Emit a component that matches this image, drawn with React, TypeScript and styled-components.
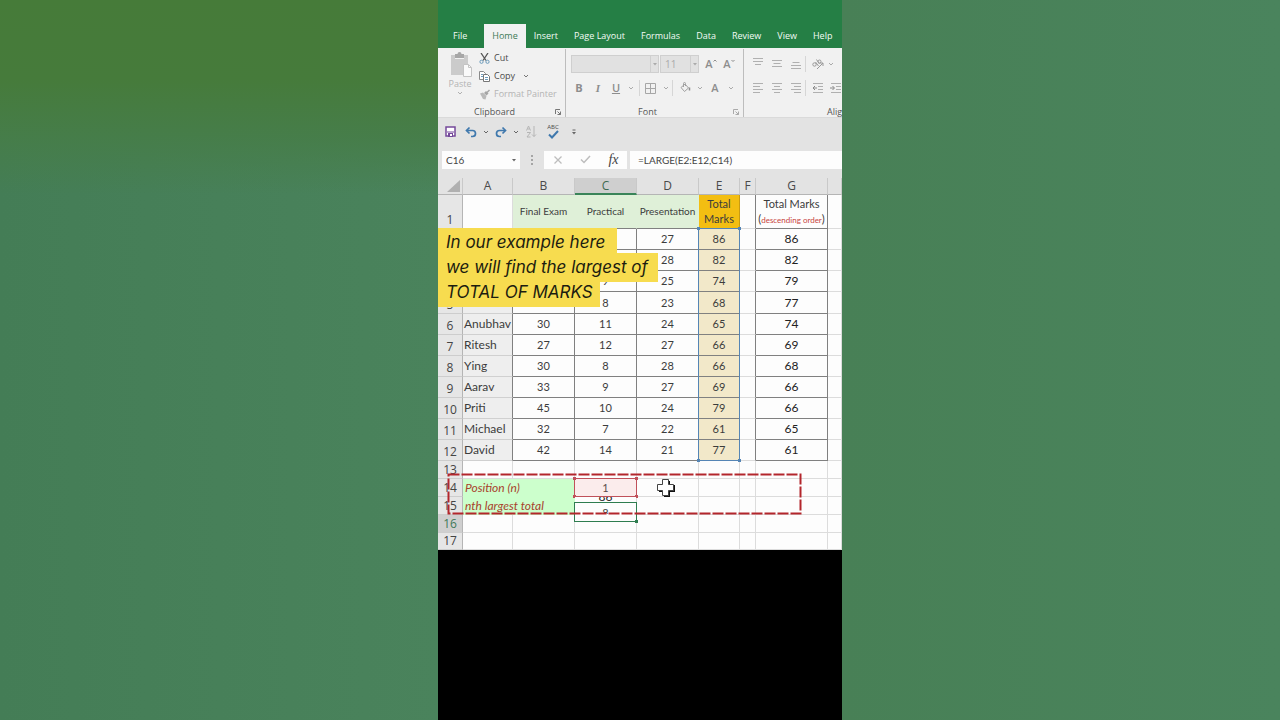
import React from "react";
import styled, { createGlobalStyle, css } from "styled-components";

const GlobalStyle = createGlobalStyle`
  *, *::before, *::after { box-sizing: border-box; }
  body { margin: 0; background: #49825b; }
  button, input, select { font: inherit; color: inherit; margin: 0; border-radius: 0; }
  svg { flex: none; }
`;

const uiFont = `"Open Sans", "Noto Sans", sans-serif`;
const cellFont = `Lato, "Open Sans", sans-serif`;

const Page = styled.div`
  display: flex;
  min-height: 100vh;
  overflow: hidden;
  font-family: ${uiFont};
  font-size: 9px;
  line-height: 12px;
  color: #444;
`;

const Backdrop = styled.div<{ $side: "left" | "right" }>`
  flex: 438 1 0;
  background: ${(p) =>
    p.$side === "left"
      ? "linear-gradient(180deg, #467b39 0, #467b3b 11%, rgba(70, 125, 72, 0.9) 19%, rgba(70, 127, 86, 0) 27%), linear-gradient(90deg, #447d56, #4a835c)"
      : "linear-gradient(90deg, #488056, #4a845d)"};
`;

const Video = styled.main`
  flex: 404 1 0;
  min-width: 404px;
  overflow: hidden;
  background: #000;
`;

const Workbook = styled.div`
  background: #e3e3e3;
`;

/* ---------- Ribbon ---------- */

const TitleBar = styled.header`
  padding-top: 24px;
  background: #257f45;
`;

const TabList = styled.nav`
  display: flex;
  height: 24px;
  padding-left: 7px;
`;

const Tab = styled.button<{ $active?: boolean; $first?: boolean }>`
  flex: none;
  padding: 0 8px;
  margin-right: ${(p) => (p.$first ? "9px" : "0")};
  border: 0;
  background: ${(p) => (p.$active ? "#f1f1f1" : "transparent")};
  color: ${(p) => (p.$active ? "#3d7a55" : "#f3fbf5")};
  white-space: nowrap;
`;

const Ribbon = styled.div`
  display: flex;
  height: 70px;
  padding-top: 1px;
  background: #f1f1f1;
  border-bottom: 1px solid #dadada;
`;

const Group = styled.section<{ $width: number }>`
  display: flex;
  flex-direction: column;
  justify-content: space-between;
  flex: 0 0 ${(p) => p.$width}px;
  border-right: 1px solid #bdbdbd;
`;

const GroupFooter = styled.footer`
  display: grid;
  grid-template-columns: 1fr 14px;
  align-items: center;
  justify-items: center;
  height: 11px;
  color: #555;
`;

const ToolButton = styled.button<{ $dim?: boolean; $w?: number }>`
  display: flex;
  flex: none;
  align-items: center;
  justify-content: ${(p) => (p.$w ? "center" : "flex-start")};
  gap: 4px;
  width: ${(p) => (p.$w ? `${p.$w}px` : "auto")};
  height: 18px;
  padding: 0;
  border: 0;
  background: none;
  color: ${(p) => (p.$dim ? "#b4b4b4" : "#4a4a4a")};
  white-space: nowrap;
`;

const ClipboardBody = styled.div`
  display: flex;
  gap: 7px;
  padding-left: 10px;
`;

const PasteButton = styled.button`
  display: flex;
  flex-direction: column;
  align-items: center;
  width: 24px;
  padding: 3px 0 0;
  border: 0;
  background: none;
  color: #b4b4b4;
`;

const ClipActions = styled.div`
  display: flex;
  flex-direction: column;
`;

const CopyLabel = styled.span`
  margin-right: 4px;
`;

const GroupRows = styled.div`
  display: flex;
  flex-direction: column;
  gap: 6px;
  padding: 6px 0 0 5px;
`;

const Row = styled.div`
  display: flex;
  align-items: center;
  height: 18px;
`;

const Picker = styled.div<{ $w: number }>`
  position: relative;
  flex: none;
  width: ${(p) => p.$w}px;
  height: 18px;
  margin-right: 1px;

  select {
    appearance: none;
    display: block;
    width: 100%;
    height: 18px;
    padding: 0 0 0 4px;
    border: 1px solid #cfcfcf;
    background: #e1e1e1;
    color: #aaa;
    font-size: 10px;
  }
  svg {
    position: absolute;
    top: 6px;
    right: 1px;
    pointer-events: none;
  }
  &::after {
    content: "";
    position: absolute;
    top: 0;
    right: 8px;
    height: 18px;
    border-left: 1px solid #cfcfcf;
  }
`;

const Glyph = styled.span<{ $kind?: "bold" | "italic" | "under" }>`
  font-size: 11px;
  color: #8d8d8d;
  font-weight: ${(p) => (p.$kind === "bold" ? 700 : 600)};
  font-style: ${(p) => (p.$kind === "italic" ? "italic" : "normal")};
  font-family: ${(p) => (p.$kind === "italic" ? `"Liberation Serif", serif` : "inherit")};
  text-decoration: ${(p) => (p.$kind === "under" ? "underline" : "none")};
`;

const Divider = styled.span`
  flex: none;
  width: 1px;
  height: 16px;
  background: #d6d6d6;
`;

/* ---------- Quick access and formula bar ---------- */

const QuickAccess = styled.div`
  display: flex;
  align-items: center;
  height: 27px;
  padding-left: 4px;
`;

const FormulaBar = styled.div`
  display: flex;
  align-items: center;
  height: 33px;
  padding: 0 0 4px 4px;
  font-family: ${cellFont};
  font-size: 10px;
`;

const NameBox = styled.div`
  position: relative;
  flex: none;
  width: 78px;

  svg {
    position: absolute;
    top: 6px;
    right: 3px;
  }
`;

const BarInput = styled.input<{ $pad: number }>`
  display: block;
  width: 100%;
  min-width: 0;
  height: 18px;
  padding: 0 0 0 ${(p) => p.$pad}px;
  border: 0;
  background: #fdfdfd;
  color: #444;
`;

const FormulaActions = styled.div`
  display: flex;
  flex: none;
  width: 83px;
  margin-right: 3px;
  background: #fdfdfd;
`;

/* ---------- Sheet ---------- */

const Sheet = styled.div`
  position: relative;
`;

const Grid = styled.table`
  width: 100%;
  table-layout: fixed;
  border-collapse: separate;
  border-spacing: 0;
  background: #fdfdfd;
  font-family: ${cellFont};
  font-size: 11px;
  color: #3c3c3c;
`;

const SheetRow = styled.tr<{ $h: number }>`
  height: ${(p) => p.$h}px;
`;

const ColHead = styled.th<{ $selected?: boolean }>`
  padding: 0;
  border-right: 1px solid #c9c9c9;
  border-bottom: ${(p) => (p.$selected ? "2px solid #3a8459" : "1px solid #b5b5b5")};
  background: ${(p) => (p.$selected ? "#cfcfcf" : "#e3e3e3")};
  color: ${(p) => (p.$selected ? "#3f6b52" : "#4a4a4a")};
  font: 400 12px/14px ${uiFont};
`;

const RowHead = styled.th<{ $selected?: boolean }>`
  padding: 0;
  border-right: 1px solid #b5b5b5;
  border-bottom: 1px solid #cdcdcd;
  background: ${(p) => (p.$selected ? "#cfcfcf" : "#e6e6e6")};
  color: ${(p) => (p.$selected ? "#3f7a59" : "#444")};
  font: 400 12px/16px ${uiFont};
  vertical-align: bottom;
`;

type Look = "plain" | "name" | "boxed" | "ranked" | "green" | "gold" | "total" | "spacer" | "heading" | "label";

const looks = {
  plain: css`
    border-color: #dcdcdc;
  `,
  name: css`
    background: #eeeeee;
    border-color: #d0d0d0 #808080 #d0d0d0 #d0d0d0;
    font-size: 12px;
    text-align: left;
    padding-left: 1px;
  `,
  boxed: css`
    border-color: #808080;
  `,
  ranked: css`
    border-color: #808080;
    font-size: 12px;
    color: #222;
  `,
  green: css`
    background: #dff0d8;
    border-color: #dff0d8;
    border-bottom-color: #808080;
    font-size: 10px;
    padding-bottom: 2px;
  `,
  gold: css`
    background: #f3be12;
    border-color: #c99b12;
    line-height: 15px;
    padding-bottom: 2px;
  `,
  total: css`
    background: #f2e8c9;
    border-color: #808080;
  `,
  spacer: css`
    border-color: #dcdcdc #808080 #dcdcdc #dcdcdc;
  `,
  heading: css`
    border-color: #808080;
    line-height: 15px;
  `,
  label: css`
    background: #ccffcc;
    border-color: #ccffcc;
    color: #a8432c;
    font-size: 12px;
    font-style: italic;
    text-align: left;
    padding-left: 2px;
  `,
};

const Cell = styled.td<{ $look: Look }>`
  padding: 0;
  border: 0 solid;
  border-width: 0 1px 1px 0;
  line-height: 14px;
  text-align: center;
  white-space: nowrap;
  ${(p) => looks[p.$look]}
`;

const OrderNote = styled.small`
  font-size: 8px;
  color: #c8453f;
`;

/* Marks drawn above the cells they annotate. */
const Overlay = styled.div<{ $x: number; $y: number }>`
  position: absolute;
  left: ${(p) => p.$x}px;
  top: ${(p) => p.$y}px;
  pointer-events: none;
`;

const RangeOutline = styled(Overlay)<{ $color: string; $w: number; $h: number; $fill?: string }>`
  display: flex;
  align-items: flex-start;
  justify-content: center;
  width: ${(p) => p.$w}px;
  height: ${(p) => p.$h}px;
  border: 1px solid ${(p) => p.$color};
  background: ${(p) => p.$fill ?? "transparent"};
  font: 11px/17px ${cellFont};
`;

const Handle = styled.i<{ $color: string; $at: string }>`
  position: absolute;
  ${(p) => (p.$at[0] === "t" ? "top: -2px;" : "bottom: -2px;")}
  ${(p) => (p.$at[1] === "l" ? "left: -2px;" : "right: -2px;")}
  width: 3px;
  height: 3px;
  background: ${(p) => p.$color};
`;

const RollingValue = styled(Overlay)`
  display: flex;
  align-items: flex-end;
  justify-content: center;
  width: 61px;
  height: 6px;
  overflow: hidden;
  background: #fdfdfd;
  font: 12px/12px ${cellFont};
  color: #222;
`;

const RollingTop = styled.span`
  height: 11px;
  overflow: hidden;
  line-height: 20px;
`;

const Caption = styled(Overlay)`
  display: flex;
  flex-direction: column;
  align-items: flex-start;
  font: italic 17px/20px Inter, sans-serif;
  color: #1c1c10;
`;

const CaptionLine = styled.span<{ $pad: string }>`
  padding: ${(p) => p.$pad};
  background: #f7dc4f;
  white-space: nowrap;
`;

/* ---------- Icons ---------- */

const Svg = ({ w, h = w, children }: { w: number; h?: number; children: React.ReactNode }) => (
  <svg width={w} height={h} viewBox={`0 0 ${w} ${h}`} fill="none" aria-hidden="true">
    {children}
  </svg>
);

const Chevron = ({ color = "#777" }: { color?: string }) => (
  <Svg w={6}>
    <path d="M1 2l2 2 2-2" stroke={color} />
  </Svg>
);

const Caret = ({ color = "#666" }: { color?: string }) => (
  <Svg w={6}>
    <path d="M1 2h4L3 4.5z" fill={color} />
  </Svg>
);

const OverflowIcon = () => (
  <Svg w={6}>
    <path d="M1.500 1h3" stroke="#666" />
    <path d="M1 3h4L3 5.5z" fill="#666" />
  </Svg>
);

const PasteIcon = () => (
  <Svg w={24} h={26}>
    <path d="M3 3h17v9h-4v11H3z" fill="#cbcbcb" />
    <path d="M7 2h2.5a2 2 0 0 1 4 0H16v4H7z" fill="#a7a7a7" />
    <path d="M7 6.5h9" stroke="#f1f1f1" />
    <path d="M15.5 12.5h5l3 3v9h-8z" fill="#fafafa" stroke="#c4c4c4" />
    <path d="M20.5 12.5v3h3" stroke="#c4c4c4" />
  </Svg>
);

const CutIcon = () => (
  <Svg w={11}>
    <path d="M2 0l5 7.5M9 0L4 7.5" stroke="#555" strokeWidth="1.3" />
    <circle cx="2.5" cy="8.8" r="1.6" stroke="#6e9cbc" />
    <circle cx="8.5" cy="8.8" r="1.6" stroke="#6e9cbc" />
  </Svg>
);

const CopyIcon = () => (
  <Svg w={11}>
    <path d="M.5.5h4l2 2v6h-6z" fill="#fff" stroke="#8a8a8a" />
    <path d="M4.500 3.500h4l2 2v5h-6z" fill="#fff" stroke="#777" />
    <path d="M2 3.500h2M2 5.500h2M6 6.500h3M6 8.500h3" stroke="#6e9cbc" />
  </Svg>
);

const BrushIcon = () => (
  <Svg w={11}>
    <path d="M1 4.500l3-1 3.500 3.500-1 3.500L4 10z" fill="#b9b9b9" />
    <path d="M5 4l2-2 2.500 2.500-2 2z" fill="#a5a5a5" />
    <path d="M8 3.500L10.500 1" stroke="#a5a5a5" strokeWidth="1.5" />
  </Svg>
);

const Launcher = ({ color = "#777" }: { color?: string }) => (
  <Svg w={8}>
    <path d="M1.500 6V1.500H6M3.500 3.500L6.500 6.500M6.500 3.500v3h-3" stroke={color} />
  </Svg>
);

const BordersIcon = () => (
  <Svg w={11}>
    <path d="M.5.5h10v10H.5zM5.500.5v10M.5 5.500h10" stroke="#a6a6a6" />
  </Svg>
);

const FillIcon = () => (
  <Svg w={12}>
    <path d="M2 5.500l4-3.500 3.500 4L5.500 9.500z" stroke="#a0a0a0" />
    <path d="M4.500 5V1.500a1 1 0 0 1 2 0V4" stroke="#a0a0a0" />
    <path d="M10.500 5.500v3" stroke="#8e8e8e" strokeWidth="1.500" />
  </Svg>
);

const GrowMark = ({ up }: { up?: boolean }) => (
  <Svg w={4} h={10}>
    <path d={up ? "M.5 2.500L2 1l1.500 1.500" : "M.5 1L2 2.500 3.500 1"} stroke="#8d8d8d" />
  </Svg>
);

const LinesIcon = ({ rows, shift = 0, top = 0 }: { rows: number[]; shift?: number; top?: number }) => (
  <Svg w={12}>
    {rows.map((len, i) => (
      <path
        key={i}
        d={`M${shift === 0 ? 1 : shift === 1 ? 6 - len / 2 : 11 - len} ${top + i * 3 + 0.5}h${len}`}
        stroke="#b0b0b0"
      />
    ))}
  </Svg>
);

const OrientationIcon = () => (
  <Svg w={12}>
    <path d="M5 11l6-6M11 8V5H8" stroke="#999" />
    <circle cx="2.500" cy="6.500" r="1.700" stroke="#999" />
    <path d="M3.500 4l3 4M4.500 1.500l3 4.500" stroke="#999" />
    <circle cx="7.500" cy="3.500" r="1.500" stroke="#999" />
  </Svg>
);

const IndentIcon = ({ out }: { out?: boolean }) => (
  <Svg w={12}>
    <path d="M1 1.500h10M6 4.500h5M6 7.500h5M1 10.500h10" stroke="#b0b0b0" />
    <path d={out ? "M5 6H1M3 4L1 6l2 2" : "M0 6h4M2.500 4l2 2-2 2"} stroke="#888" />
  </Svg>
);

const SaveIcon = () => (
  <Svg w={11}>
    <path d="M1 1h9v9H1z" fill="#fff" stroke="#75499b" strokeWidth="1.500" />
    <path d="M2 6h7" stroke="#75499b" />
    <path d="M3 7h5v4H3z" fill="#75499b" />
    <path d="M5 8h2v2H5z" fill="#fff" />
  </Svg>
);

const UndoIcon = ({ flip }: { flip?: boolean }) => (
  <Svg w={12}>
    <g transform={flip ? "matrix(-1 0 0 1 12 0)" : undefined}>
      <path d="M2 4.500h5.500a3 3 0 0 1 0 6H6" stroke="#3f78ad" strokeWidth="1.700" />
      <path d="M4.500 1.500l-3 3 3 3" stroke="#3f78ad" strokeWidth="1.700" />
    </g>
  </Svg>
);

const SortIcon = () => (
  <Svg w={11} h={13}>
    <path d="M.5 5.500L2.500 1l2 4.500M1.500 4h2M1 7.500h3.500L1 12h3.500" stroke="#b5b5b5" />
    <path d="M8 1v10.500M6 9.500l2 2 2-2" stroke="#b5b5b5" />
  </Svg>
);

const SpellButton = styled(ToolButton)`
  flex-direction: column;
  gap: 0;
  font-size: 6px;
  line-height: 6px;
`;

const CheckIcon = ({ color = "#3f78ad", width = 2 }: { color?: string; width?: number }) => (
  <Svg w={11} h={9}>
    <path d="M1 4.500L4 7.500 10 1" stroke={color} strokeWidth={width} />
  </Svg>
);

const CrossIcon = () => (
  <Svg w={10}>
    <path d="M1.500 1.500l7 7M8.500 1.500l-7 7" stroke="#bdbdbd" strokeWidth="1.300" />
  </Svg>
);

const Fx = styled.span`
  font: italic 14px/16px "Liberation Serif", serif;
  color: #444;
`;

const DotsIcon = () => (
  <Svg w={24} h={12}>
    <path d="M12 1v10" stroke="#a5a5a5" strokeWidth="2" strokeDasharray="2 2" />
  </Svg>
);

const SelectAll = styled.svg`
  display: block;
`;

const SelectAllIcon = () => (
  <SelectAll width="24" height="16" viewBox="0 0 24 16" aria-hidden="true">
    <path d="M22 2v12H9z" fill="#b0b0b0" />
  </SelectAll>
);

const DashedFrame = () => (
  <Svg w={356} h={43}>
    <rect x="1.500" y="1.500" width="352" height="39" stroke="#b3262c" strokeWidth="2" strokeDasharray="11 2" />
  </Svg>
);

const CrossCursor = () => (
  <Svg w={20}>
    <path d="M8 3h6v4h5v7h-5v5H8v-5H3v-1" fill="#111" />
    <path d="M6.500 1.500h6v5h5v6h-5v5h-6v-5h-5v-6h5z" fill="#fff" stroke="#444" />
  </Svg>
);

/* ---------- Data ---------- */

type MarkRow = { n: string; h: number; cells: string[]; ranked: string };

const marks: MarkRow[] = [
  { n: "", h: 21, cells: ["", "", "", "27", "86"], ranked: "86" },
  { n: "", h: 21, cells: ["", "", "", "28", "82"], ranked: "82" },
  { n: "", h: 21, cells: ["", "", "9", "25", "74"], ranked: "79" },
  { n: "5", h: 22, cells: ["", "", "8", "23", "68"], ranked: "77" },
  { n: "6", h: 21, cells: ["Anubhav", "30", "11", "24", "65"], ranked: "74" },
  { n: "7", h: 21, cells: ["Ritesh", "27", "12", "27", "66"], ranked: "69" },
  { n: "8", h: 21, cells: ["Ying", "30", "8", "28", "66"], ranked: "68" },
  { n: "9", h: 21, cells: ["Aarav", "33", "9", "27", "69"], ranked: "66" },
  { n: "10", h: 21, cells: ["Priti", "45", "10", "24", "79"], ranked: "66" },
  { n: "11", h: 21, cells: ["Michael", "32", "7", "22", "61"], ranked: "65" },
  { n: "12", h: 21, cells: ["David", "42", "14", "21", "77"], ranked: "61" },
];

const markLooks: Look[] = ["name", "boxed", "boxed", "boxed", "total"];
const columns = [25, 50, 62, 62, 62, 41, 16, 72];
const tabs = ["File", "Home", "Insert", "Page Layout", "Formulas", "Data", "Review", "View", "Help"];

const Blank = ({ count }: { count: number }) => (
  <>
    {Array.from({ length: count }, (_, i) => (
      <Cell key={i} $look="plain" />
    ))}
  </>
);

const Chev = ({ label, w = 10, color = "#aaa" }: { label: string; w?: number; color?: string }) => (
  <ToolButton $w={w} aria-label={label}>
    <Chevron color={color} />
  </ToolButton>
);

function RibbonArea() {
  return (
    <>
      <TitleBar>
        <TabList>
          {tabs.map((t) => (
            <Tab key={t} $active={t === "Home"} $first={t === "File"}>
              {t}
            </Tab>
          ))}
        </TabList>
      </TitleBar>
      <Ribbon>
        <Group $width={128}>
          <ClipboardBody>
            <PasteButton>
              <PasteIcon />
              <span>Paste</span>
              <Chevron color="#b0b0b0" />
            </PasteButton>
            <ClipActions>
              <ToolButton><CutIcon />Cut</ToolButton>
              <ToolButton><CopyIcon /><CopyLabel>Copy</CopyLabel><Chevron /></ToolButton>
              <ToolButton $dim><BrushIcon />Format Painter</ToolButton>
            </ClipActions>
          </ClipboardBody>
          <GroupFooter><span>Clipboard</span><Launcher /></GroupFooter>
        </Group>
        <Group $width={178}>
          <GroupRows>
            <Row>
              <Picker $w={88}>
                <select aria-label="Font name" defaultValue=""><option value="" /></select>
                <Caret color="#aaa" />
              </Picker>
              <Picker $w={39}>
                <select aria-label="Font size" defaultValue="11"><option>11</option></select>
                <Caret color="#aaa" />
              </Picker>
              <ToolButton $w={22} aria-label="Increase font size"><Row><Glyph>A</Glyph><GrowMark up /></Row></ToolButton>
              <ToolButton $w={14} aria-label="Decrease font size"><Row><Glyph>A</Glyph><GrowMark /></Row></ToolButton>
            </Row>
            <Row>
              <ToolButton $w={16}><Glyph $kind="bold">B</Glyph></ToolButton>
              <ToolButton $w={22}><Glyph $kind="italic">I</Glyph></ToolButton>
              <ToolButton $w={14}><Glyph $kind="under">U</Glyph></ToolButton>
              <Chev label="Underline styles" w={16} />
              <Divider />
              <ToolButton $w={20} aria-label="Borders"><BordersIcon /></ToolButton>
              <Chev label="Border styles" w={12} />
              <Divider />
              <ToolButton $w={24} aria-label="Fill color"><FillIcon /></ToolButton>
              <Chev label="Fill colors" w={6} />
              <ToolButton $w={24} aria-label="Font color"><Glyph>A</Glyph></ToolButton>
              <Chev label="Font colors" w={8} />
            </Row>
          </GroupRows>
          <GroupFooter><span>Font</span><Launcher color="#aaa" /></GroupFooter>
        </Group>
        <Group $width={224}>
          <GroupRows>
            <Row>
              <ToolButton $w={18} aria-label="Top align"><LinesIcon rows={[10, 10, 6]} shift={1} /></ToolButton>
              <ToolButton $w={19} aria-label="Middle align"><LinesIcon rows={[10, 7, 10]} shift={1} top={2} /></ToolButton>
              <ToolButton $w={19} aria-label="Bottom align"><LinesIcon rows={[7, 10, 10]} shift={1} top={4} /></ToolButton>
              <Divider />
              <ToolButton $w={23} aria-label="Orientation"><OrientationIcon /></ToolButton>
              <Chev label="Orientation options" w={4} />
            </Row>
            <Row>
              <ToolButton $w={18} aria-label="Align left"><LinesIcon rows={[10, 7, 10, 7]} top={1} /></ToolButton>
              <ToolButton $w={19} aria-label="Center"><LinesIcon rows={[10, 6, 10, 6]} shift={1} top={1} /></ToolButton>
              <ToolButton $w={19} aria-label="Align right"><LinesIcon rows={[10, 7, 10, 7]} shift={2} top={1} /></ToolButton>
              <Divider />
              <ToolButton $w={23} aria-label="Decrease indent"><IndentIcon out /></ToolButton>
              <ToolButton $w={14} aria-label="Increase indent"><IndentIcon /></ToolButton>
            </Row>
          </GroupRows>
          <GroupFooter><span>Alignment</span><Launcher color="#aaa" /></GroupFooter>
        </Group>
      </Ribbon>
    </>
  );
}

function Bars() {
  return (
    <>
      <QuickAccess>
        <ToolButton $w={16} aria-label="Save"><SaveIcon /></ToolButton>
        <ToolButton $w={26} aria-label="Undo"><UndoIcon /></ToolButton>
        <Chev label="Undo history" w={4} color="#666" />
        <ToolButton $w={26} aria-label="Redo"><UndoIcon flip /></ToolButton>
        <Chev label="Redo history" w={4} color="#666" />
        <ToolButton $w={26} aria-label="Sort"><SortIcon /></ToolButton>
        <SpellButton $w={18}><span>ABC</span><CheckIcon /></SpellButton>
        <ToolButton $w={24} aria-label="Customize toolbar"><OverflowIcon /></ToolButton>
      </QuickAccess>
      <FormulaBar>
        <NameBox>
          <BarInput $pad={4} aria-label="Name box" defaultValue="C16" />
          <Caret />
        </NameBox>
        <DotsIcon />
        <FormulaActions>
          <ToolButton $w={27} aria-label="Cancel"><CrossIcon /></ToolButton>
          <ToolButton $w={29} aria-label="Enter"><CheckIcon color="#bdbdbd" width={1.5} /></ToolButton>
          <ToolButton $w={27}><Fx>fx</Fx></ToolButton>
        </FormulaActions>
        <BarInput $pad={8} aria-label="Formula" defaultValue="=LARGE(E2:E12,C14)" />
      </FormulaBar>
    </>
  );
}

function SheetArea() {
  return (
    <Sheet>
      <Grid>
        <colgroup>
          {columns.map((w, i) => (
            <col key={i} width={w} />
          ))}
          <col />
        </colgroup>
        <thead>
          <SheetRow $h={17}>
            <ColHead aria-label="Select all"><SelectAllIcon /></ColHead>
            {["A", "B", "C", "D", "E", "F", "G"].map((c) => (
              <ColHead key={c} $selected={c === "C"}>{c}</ColHead>
            ))}
            <ColHead />
          </SheetRow>
        </thead>
        <tbody>
          <SheetRow $h={34}>
            <RowHead>1</RowHead>
            <Cell $look="plain" />
            <Cell $look="green">Final Exam</Cell>
            <Cell $look="green">Practical</Cell>
            <Cell $look="green">Presentation</Cell>
            <Cell $look="gold">Total<br />Marks</Cell>
            <Cell $look="spacer" />
            <Cell $look="heading">Total Marks<br />(<OrderNote>descending order</OrderNote>)</Cell>
            <Cell $look="plain" />
          </SheetRow>
          {marks.map((row, r) => (
            <SheetRow key={r} $h={row.h}>
              <RowHead>{row.n}</RowHead>
              {row.cells.map((v, i) => (
                <Cell key={i} $look={markLooks[i]}>{v}</Cell>
              ))}
              <Cell $look="spacer" />
              <Cell $look="ranked">{row.ranked}</Cell>
              <Cell $look="plain" />
            </SheetRow>
          ))}
          <SheetRow $h={18}><RowHead>13</RowHead><Blank count={8} /></SheetRow>
          <SheetRow $h={18}>
            <RowHead>14</RowHead>
            <Cell $look="label" colSpan={2}>Position (n)</Cell>
            <Cell $look="plain">1</Cell>
            <Blank count={5} />
          </SheetRow>
          <SheetRow $h={18}>
            <RowHead>15</RowHead>
            <Cell $look="label" colSpan={2}>nth largest total</Cell>
            <Blank count={6} />
          </SheetRow>
          <SheetRow $h={18}><RowHead $selected>16</RowHead><Blank count={8} /></SheetRow>
          <SheetRow $h={17}><RowHead>17</RowHead><Blank count={8} /></SheetRow>
        </tbody>
      </Grid>

      <RangeOutline $x={260} $y={50} $w={42} $h={233} $color="#5585b5">
        {["tl", "tr", "bl", "br"].map((a) => <Handle key={a} $color="#5585b5" $at={a} />)}
      </RangeOutline>
      <RangeOutline $x={136} $y={300} $w={63} $h={19} $color="#c0505a" $fill="rgba(240, 150, 150, 0.16)">
        {["tl", "tr", "bl", "br"].map((a) => <Handle key={a} $color="#c0505a" $at={a} />)}
      </RangeOutline>
      <RollingValue $x={137} $y={319}>86</RollingValue>
      <RangeOutline $x={136} $y={324} $w={63} $h={20} $color="#2f7d50" $fill="#fdfdfd">
        <RollingTop>8</RollingTop>
        <Handle $color="#2f7d50" $at="br" />
      </RangeOutline>
      <Overlay $x={9} $y={295}><DashedFrame /></Overlay>
      <Overlay $x={218} $y={300}><CrossCursor /></Overlay>
      <Caption $x={0} $y={50}>
        <CaptionLine $pad="4px 12px 1px 8px">In our example here</CaptionLine>
        <CaptionLine $pad="4px 10px 5px 8px">we will find the largest of</CaptionLine>
        <CaptionLine $pad="0 7px 5px 8px">TOTAL OF MARKS</CaptionLine>
      </Caption>
    </Sheet>
  );
}

export default function App() {
  return (
    <Page>
      <GlobalStyle />
      <Backdrop $side="left" />
      <Video>
        <Workbook>
          <RibbonArea />
          <Bars />
          <SheetArea />
        </Workbook>
      </Video>
      <Backdrop $side="right" />
    </Page>
  );
}
